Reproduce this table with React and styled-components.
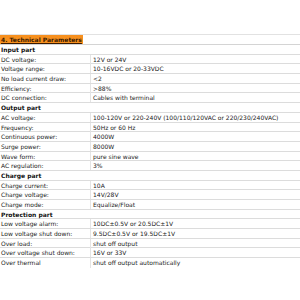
import styled, { createGlobalStyle } from "styled-components"

const Global = createGlobalStyle`
  html, body { margin: 0; padding: 0; background: #fff; }
  body { font-family: "DejaVu Sans", Verdana, sans-serif; }
`

const Page = styled.div`
  width: 300px;
  height: 300px;
  padding-top: 34px;
  box-sizing: border-box;
  overflow: hidden;
`

const TitleRow = styled.div`
  height: 9px;
  border-top: 1px solid #e2e2e2;
  border-bottom: 1px solid #d4d4d4;
  display: flex;
  align-items: stretch;
`

const Title = styled.span`
  background: #f7901e;
  color: #3a1a00;
  font-weight: bold;
  font-size: 6px;
  line-height: 9px;
  text-decoration: underline;
  padding: 0 1px 0 1px;
`

const Row = styled.div`
  display: grid;
  grid-template-columns: 91px 1fr;
  height: 9.7px;
  box-sizing: border-box;
  border-bottom: ${p => (p.$last ? "none" : "1px solid #dcdcdc")};
  font-size: 6px;
  line-height: 9px;
  color: #222;
  white-space: nowrap;
`

const Label = styled.div`
  padding-left: 1px;
  border-right: ${p => (p.$section ? "none" : "1px solid #e4e4e4")};
  font-weight: ${p => (p.$section ? "bold" : "normal")};
  color: ${p => (p.$section ? "#111" : "#222")};
`

const Value = styled.div`
  padding-left: 2px;
`

const rows = [
  ["Input part"],
  ["DC voltage:", "12V or 24V"],
  ["Voltage range:", "10-16VDC or 20-33VDC"],
  ["No load current draw:", "<2"],
  ["Efficiency:", ">88%"],
  ["DC connection:", "Cables with terminal"],
  ["Output part"],
  ["AC voltage:", "100-120V or 220-240V (100/110/120VAC or 220/230/240VAC)"],
  ["Frequency:", "50Hz or 60 Hz"],
  ["Continuous power:", "4000W"],
  ["Surge power:", "8000W"],
  ["Wave form:", "pure sine wave"],
  ["AC regulation:", "3%"],
  ["Charge part"],
  ["Charge current:", "10A"],
  ["Charge voltage:", "14V/28V"],
  ["Charge mode:", "Equalize/Float"],
  ["Protection part"],
  ["Low voltage alarm:", "10DC±0.5V or 20.5DC±1V"],
  ["Low voltage shut down:", "9.5DC±0.5V or 19.5DC±1V"],
  ["Over load:", "shut off output"],
  ["Over voltage shut down:", "16V or 33V"],
  ["Over thermal", "shut off output automatically"],
]

const App = () => {
  return (
    <Page>
      <Global />
      <TitleRow>
        <Title>4. Technical Parameters</Title>
      </TitleRow>
      {rows.map((r, i) => (
        <Row key={i} $last={i === rows.length - 1}>
          <Label $section={r.length === 1}>{r[0]}</Label>
          <Value>{r[1]}</Value>
        </Row>
      ))}
    </Page>
  )
}

export default App
